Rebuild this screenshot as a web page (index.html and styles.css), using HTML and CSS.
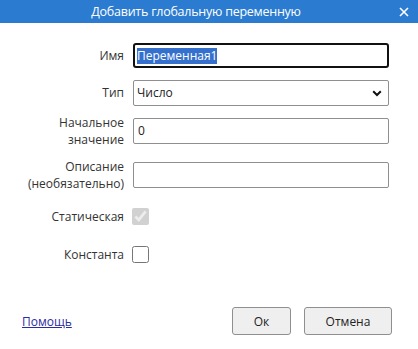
FILE: index.html
```html
<!DOCTYPE html>
<html lang="ru">
<head>
  <meta charset="UTF-8" />
  <title>Добавить глобальную переменную</title>
  <link rel="stylesheet" href="styles.css">
</head>
<body>
  <div class="dialog">
    <div class="title-bar">
      <span class="title">Добавить глобальную переменную</span>
      <svg class="close" width="10" height="10" viewBox="0 0 10 10">
        <path d="M1 1 L9 9 M9 1 L1 9" stroke="#fff" stroke-width="1.6" />
      </svg>
    </div>

    <div class="form">
      <div class="row row-name">
        <label>Имя</label>
        <div class="field fake-input focused"><span class="selected">Переменная1</span></div>
      </div>
      <div class="row row-type">
        <label>Тип</label>
        <div class="select-wrap">
          <select class="field">
            <option>Число</option>
            <option>Строка</option>
          </select>
          <svg class="chevron" width="10" height="7" viewBox="0 0 10 7">
            <path d="M1.2 1.2 L5 5 L8.8 1.2" stroke="#111" stroke-width="2" fill="none" />
          </svg>
        </div>
      </div>
      <div class="row row-init">
        <label>Начальное<br>значение</label>
        <input class="field" type="text" value="0">
      </div>
      <div class="row row-desc">
        <label>Описание<br>(необязательно)</label>
        <input class="field" type="text">
      </div>
      <div class="row row-static">
        <label>Статическая</label>
        <input type="checkbox" checked disabled>
      </div>
      <div class="row row-const">
        <label>Константа</label>
        <input type="checkbox">
      </div>
    </div>

    <div class="footer">
      <a href="#" class="help">Помощь</a>
      <div class="buttons">
        <button class="btn-ok">Ок</button>
        <button class="btn-cancel">Отмена</button>
      </div>
    </div>
  </div>
</body>
</html>
```

FILE: styles.css
```css
body {
  margin: 0;
  background-color: #fff;
  font-family: 'Open Sans', 'Noto Sans', sans-serif;
  font-size: 12px;
  color: #333;
}

.dialog {
  width: 418px;
  height: 349px;
  display: flex;
  flex-direction: column;
}

.title-bar {
  height: 23px;
  padding-right: 26px;
  background-color: #2b7bd0;
  color: #fff;
  display: flex;
  align-items: center;
  justify-content: center;
  position: relative;
}

.title {
  font-size: 12.5px;
  letter-spacing: -0.25px;
}

.close {
  position: absolute;
  right: 9px;
  top: 7px;
}

.form {
  padding-top: 14px;
  padding-left: 8px;
  display: flex;
  flex-direction: column;
}

.row {
  display: flex;
  align-items: center;
}

.row label {
  width: 116px;
  margin-right: 9px;
  text-align: right;
  line-height: 17px;
  color: #333;
}

.row-name { height: 37px; }
.row-type { height: 37px; }
.row-init { height: 39px; }
.row-desc { height: 50px; }
.row-static { height: 32px; }
.row-const { height: 44px; }

.field {
  box-sizing: border-box;
  width: 256px;
  height: 26px;
  border: 1px solid #8f8f8f;
  border-radius: 2px;
  padding: 0 4px;
  font-family: inherit;
  font-size: 12px;
  color: #222;
  background-color: #fff;
  outline: none;
}

.fake-input {
  display: flex;
  align-items: center;
  height: 25px;
}

.focused {
  border: 2px solid #111;
  border-radius: 3px;
  padding: 0 2px;
}

.selected {
  background-color: #3470cc;
  color: #fff;
  line-height: 16px;
}

.select-wrap {
  position: relative;
}

select.field {
  appearance: none;
  -webkit-appearance: none;
  padding-left: 3px;
}

.chevron {
  position: absolute;
  right: 7px;
  top: 10px;
  pointer-events: none;
}

input[type="checkbox"] {
  width: 17px;
  height: 17px;
  margin: 0 0 0 -1px;
}

.footer {
  margin-top: 31px;
  padding: 0 26px 0 22px;
  display: flex;
  align-items: center;
  justify-content: space-between;
}

.help {
  color: #2c2ca0;
  text-decoration: underline;
  font-size: 12px;
}

.buttons {
  display: flex;
  gap: 13px;
}

button {
  height: 28px;
  background-color: #efefef;
  border: 1px solid #8f8f8f;
  border-radius: 3px;
  font-family: inherit;
  font-size: 12px;
  color: #222;
  cursor: pointer;
}

.btn-ok { width: 59px; }
.btn-cancel { width: 88px; }
```
